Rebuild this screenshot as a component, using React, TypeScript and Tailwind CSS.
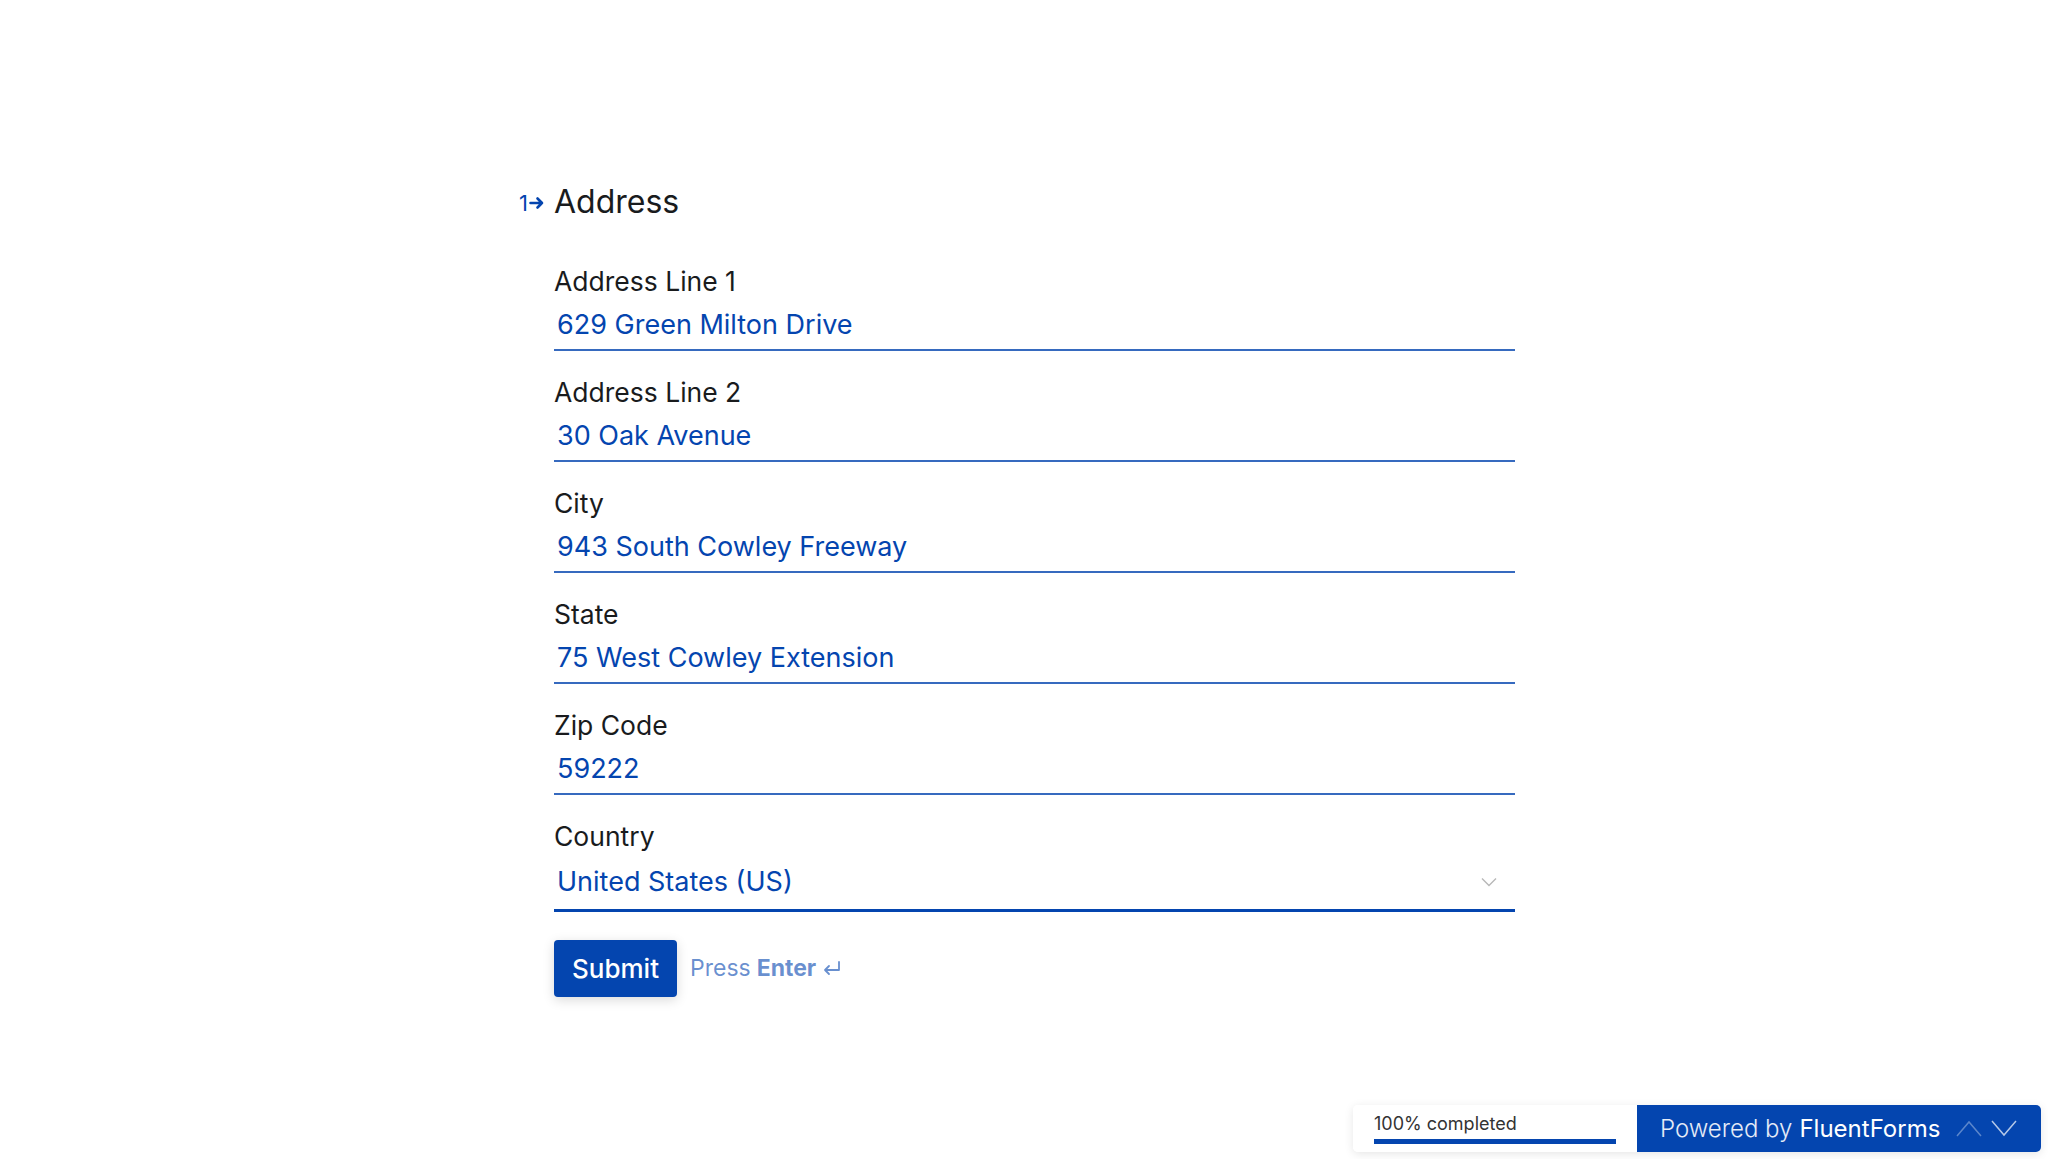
const fields = [
  { label: "Address Line 1", value: "629 Green Milton Drive" },
  { label: "Address Line 2", value: "30 Oak Avenue" },
  { label: "City", value: "943 South Cowley Freeway" },
  { label: "State", value: "75 West Cowley Extension" },
  { label: "Zip Code", value: "59222" },
];

const font = { fontFamily: "Inter, 'Noto Sans', sans-serif" };

function Field({ label, value }: { label: string; value: string }) {
  return (
    <div className="flex flex-col">
      <div className="text-[26.5px] leading-[30px] text-[#191b1d] mb-[13px]">{label}</div>
      <div className="border-b-2 border-[#0445AF]/80 pb-[8px] pl-[3px] text-[27px] leading-[32px] text-[#0445AF]">
        {value}
      </div>
    </div>
  );
}

export default function App() {
  return (
    <div className="relative min-h-[1159px] w-full bg-white" style={font}>
      <div className="ml-[554px] w-[961px] pt-[184px] flex flex-col">
        {/* Question heading */}
        <div className="relative flex items-center">
          <div className="absolute -left-[35px] top-[8px] flex items-center text-[#0445AF]">
            <span className="text-[22px] leading-[22px]">1</span>
            <svg width="16" height="16" viewBox="0 0 16 16" className="ml-[1px]">
              <path d="M1.5 8h11.5M8.5 3.5L13 8l-4.5 4.5" fill="none" stroke="#0445AF" strokeWidth="2.6" strokeLinecap="round" strokeLinejoin="round" />
            </svg>
          </div>
          <h1 className="text-[32px] leading-[36px] text-[#191b1d]">Address</h1>
        </div>

        <div className="mt-[46px] flex flex-col gap-[26px]">
          {fields.map((f) => (
            <Field key={f.label} label={f.label} value={f.value} />
          ))}

          {/* Country select */}
          <div className="flex flex-col">
            <div className="text-[26.5px] leading-[30px] text-[#191b1d] mb-[15px]">Country</div>
            <div className="flex items-center justify-between border-b-[3px] border-[#0445AF] pb-[11px] pl-[3px] pr-[18px]">
              <span className="text-[27px] leading-[32px] text-[#0445AF]">United States (US)</span>
              <svg width="16" height="10" viewBox="0 0 16 10">
                <path d="M1 1.5l7 7 7-7" fill="none" stroke="#b8b8b8" strokeWidth="1.4" />
              </svg>
            </div>
          </div>
        </div>

        {/* Submit */}
        <div className="mt-[28px] flex items-center">
          <button className="h-[57px] w-[123px] rounded-[4px] bg-[#0445AF] text-[26px] font-medium text-white shadow-[0_3px_12px_rgba(0,0,0,0.15)]">
            Submit
          </button>
          <div className="ml-[13px] flex items-center text-[23px] text-[#0445AF]/60">
            <span>Press</span>
            <span className="ml-[6px] font-bold">Enter</span>
            <svg width="20" height="18" viewBox="0 0 20 18" className="ml-[6px]">
              <path d="M17 2v8H3M7 6l-4 4 4 4" fill="none" stroke="currentColor" strokeWidth="1.8" strokeLinecap="round" strokeLinejoin="round" />
            </svg>
          </div>
        </div>
      </div>

      {/* Footer progress + branding */}
      <div className="fixed right-[7px] bottom-[7px] flex h-[47px] rounded-[5px] shadow-[0_2px_10px_rgba(0,0,0,0.1)]">
        <div className="flex w-[284px] flex-col justify-center rounded-l-[5px] bg-white pl-[21px] pr-[21px]">
          <div className="text-[18px] leading-[20px] text-[#333]">100% completed</div>
          <div className="mt-[5px] h-[5px] w-[242px] bg-[#0445AF]" />
        </div>
        <div className="flex w-[404px] items-center rounded-r-[5px] bg-[#0445AF] pl-[23px]">
          <span className="text-[24px] font-light text-white/90">Powered by</span>
          <span className="ml-[7px] text-[24px] text-white">FluentForms</span>
          <div className="ml-[16px] flex items-center gap-[9px]">
            <svg width="26" height="17" viewBox="0 0 26 17">
              <path d="M1 16L13 2 25 16" fill="none" stroke="rgba(255,255,255,0.35)" strokeWidth="1.5" />
            </svg>
            <svg width="26" height="17" viewBox="0 0 26 17">
              <path d="M1 1l12 14L25 1" fill="none" stroke="rgba(255,255,255,0.7)" strokeWidth="1.5" />
            </svg>
          </div>
        </div>
      </div>
    </div>
  );
}
